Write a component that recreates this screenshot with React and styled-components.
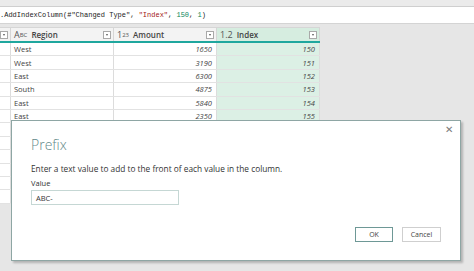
import React from 'react'
import styled, { createGlobalStyle } from 'styled-components';

const GlobalStyle = createGlobalStyle`
  html, body {
    margin: 0;
    padding: 0;
    background: #e6e6e6;
    font-family: 'Open Sans', 'Noto Sans', sans-serif;
  }
`;

const Page = styled.div`
  position: relative;
  width: 474px;
  height: 271px;
  overflow: hidden;
  background: #e6e6e6;
`;

const TopStrip = styled.div`
  height: 6px;
  background: #ebebeb;
  border-bottom: 1px solid #cfcfcf;
`;

const FormulaBar = styled.div`
  height: 16px;
  background: #ffffff;
  border-bottom: 1px solid #d4d4d4;
  font-family: 'Liberation Mono', 'DejaVu Sans Mono', monospace;
  font-size: 7px;
  line-height: 16px;
  color: #222;
  white-space: nowrap;
  overflow: hidden;

  .str { color: #a31515; }
  .num { color: #098658; }
`;

const Grid = styled.div`
  margin-top: 3px;
  width: 320px;
  background: #fff;
`;

const HeaderRow = styled.div`
  display: flex;
  height: 16px;
  box-sizing: border-box;
  border-top: 1px solid #d6d6d6;
  border-bottom: 2px solid #1fa79e;
`;

const HeaderCell = styled.div`
  box-sizing: border-box;
  width: ${p => p.w}px;
  display: flex;
  align-items: center;
  padding: 0 2px 0 ${p => (p.stub ? 0 : 3)}px;
  background: ${p => (p.selected ? '#d6ede0' : '#f3f3f3')};
  border-right: 1px solid #d6d6d6;
  font-size: 8px;
  font-weight: 600;
  color: #444;
`;

const TypeIcon = styled.span`
  display: inline-flex;
  align-items: center;
  font-size: 9px;
  font-weight: 400;
  color: #555;
  margin-right: 4px;

  sup { font-size: 6px; vertical-align: 3px; }
  sub { font-size: 6px; vertical-align: -2px; }
`;

const Label = styled.span`
  flex: 1;
`;

const DropBox = styled.span`
  box-sizing: border-box;
  width: 8px;
  height: 8px;
  border: 1px solid #a9a9a9;
  background: #fff;
  display: flex;
  align-items: center;
  justify-content: center;

  &::after {
    content: '';
    border-left: 1.5px solid transparent;
    border-right: 1.5px solid transparent;
    border-top: 2px solid #555;
  }
`;

const Row = styled.div`
  display: flex;
  height: 13.4px;
  box-sizing: border-box;
  border-bottom: 1px solid #e2e2e2;
`;

const Cell = styled.div`
  box-sizing: border-box;
  width: ${p => p.w}px;
  padding: 0 4px 0 3px;
  display: flex;
  align-items: center;
  justify-content: ${p => (p.num ? 'flex-end' : 'flex-start')};
  background: ${p => (p.selected ? '#dcf0e5' : '#fff')};
  border-right: 1px solid #dcdcdc;
  font-size: 7.5px;
  font-style: ${p => (p.num ? 'italic' : 'normal')};
  color: #444;
`;

const Dialog = styled.div`
  position: absolute;
  left: 11px;
  top: 120px;
  width: 450px;
  height: 141px;
  box-sizing: border-box;
  background: #fff;
  border: 1px solid #8ea6a4;
  box-shadow: 2px 2px 2px rgba(0, 0, 0, 0.22);
  padding: 14px 19px 18px 19px;
  display: flex;
  flex-direction: column;
`;

const Close = styled.span`
  position: absolute;
  right: 7px;
  top: 3px;
  font-size: 10px;
  color: #7a7a7a;
  line-height: 10px;
`;

const Title = styled.div`
  font-size: 14px;
  font-weight: 300;
  color: #5f8888;
  line-height: 20px;
`;

const Description = styled.div`
  margin-top: 8px;
  font-size: 8.3px;
  color: #333;
  line-height: 12px;
`;

const FieldLabel = styled.div`
  margin-top: 3px;
  font-size: 7.5px;
  color: #333;
  line-height: 11px;
`;

const Input = styled.div`
  margin-top: 1px;
  width: 148px;
  height: 15px;
  box-sizing: border-box;
  border: 1px solid #c5d7d4;
  padding-left: 4px;
  display: flex;
  align-items: center;
  font-size: 7.5px;
  color: #333;
`;

const Buttons = styled.div`
  margin-top: auto;
  display: flex;
  justify-content: flex-end;
  gap: 9px;
`;

const Button = styled.div`
  width: ${p => p.w}px;
  height: 15px;
  box-sizing: border-box;
  border: 1px solid ${p => (p.primary ? '#6e9896' : '#cfcfcf')};
  display: flex;
  align-items: center;
  justify-content: center;
  font-size: 7px;
  color: #444;
  background: #fff;
`;

// rows below the sixth sit under the dialog, so they stay empty
const rows = [
  ['West', 1650, 150],
  ['West', 3190, 151],
  ['East', 6300, 152],
  ['South', 4875, 153],
  ['East', 5840, 154],
  ['East', 2350, 155],
  ['', '', ''],
  ['', '', ''],
  ['', '', ''],
  ['', '', ''],
  ['', '', ''],
  ['', '', ''],
];

export default function App() {
  return (
    <Page>
      <GlobalStyle />
      <TopStrip />
      <FormulaBar>
        .AddIndexColumn(#"Changed Type", <span className='str'>"Index"</span>, <span className='num'>150</span>, <span className='num'>1</span>)
      </FormulaBar>
      <Grid>
        <HeaderRow>
          <HeaderCell w={11} stub><DropBox /></HeaderCell>
          <HeaderCell w={103}>
            <TypeIcon>A<sup>B</sup><sub>C</sub></TypeIcon>
            <Label>Region</Label>
            <DropBox />
          </HeaderCell>
          <HeaderCell w={103}>
            <TypeIcon>1<sup>2</sup><sub>3</sub></TypeIcon>
            <Label>Amount</Label>
            <DropBox />
          </HeaderCell>
          <HeaderCell w={103} selected>
            <TypeIcon>1.2</TypeIcon>
            <Label>Index</Label>
            <DropBox />
          </HeaderCell>
        </HeaderRow>
        {rows.map(([region, amount, index], i) => (
          <Row key={`row-${i}`}>
            <Cell w={11} />
            <Cell w={103}>{region}</Cell>
            <Cell w={103} num>{amount}</Cell>
            <Cell w={103} num selected>{index}</Cell>
          </Row>
        ))}
      </Grid>
      <Dialog>
        <Close>✕</Close>
        <Title>Prefix</Title>
        <Description>Enter a text value to add to the front of each value in the column.</Description>
        <FieldLabel>Value</FieldLabel>
        <Input>ABC-</Input>
        <Buttons>
          <Button w={38} primary>OK</Button>
          <Button w={39}>Cancel</Button>
        </Buttons>
      </Dialog>
    </Page>
  )
}
